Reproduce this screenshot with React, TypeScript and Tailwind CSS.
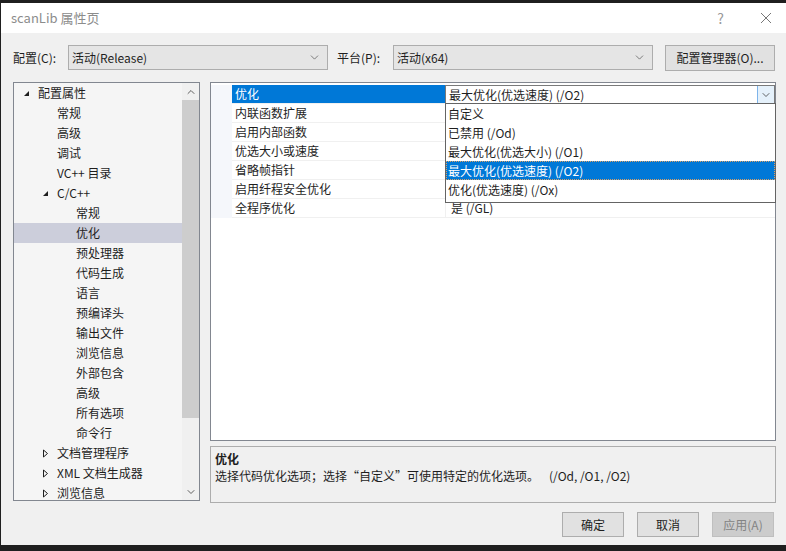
import { ChevronDown, ChevronUp } from "lucide-react";

const font = { fontFamily: '"Noto Sans CJK SC", "Noto Sans", sans-serif' };

type Node = { label: string; level: number; arrow?: "open" | "closed"; selected?: boolean };

const tree: Node[] = [
  { label: "配置属性", level: 0, arrow: "open" },
  { label: "常规", level: 1 },
  { label: "高级", level: 1 },
  { label: "调试", level: 1 },
  { label: "VC++ 目录", level: 1 },
  { label: "C/C++", level: 1, arrow: "open" },
  { label: "常规", level: 2 },
  { label: "优化", level: 2, selected: true },
  { label: "预处理器", level: 2 },
  { label: "代码生成", level: 2 },
  { label: "语言", level: 2 },
  { label: "预编译头", level: 2 },
  { label: "输出文件", level: 2 },
  { label: "浏览信息", level: 2 },
  { label: "外部包含", level: 2 },
  { label: "高级", level: 2 },
  { label: "所有选项", level: 2 },
  { label: "命令行", level: 2 },
  { label: "文档管理程序", level: 1, arrow: "closed" },
  { label: "XML 文档生成器", level: 1, arrow: "closed" },
  { label: "浏览信息", level: 1, arrow: "closed" },
];

const props = [
  ["优化", "最大优化(优选速度) (/O2)"],
  ["内联函数扩展", ""],
  ["启用内部函数", ""],
  ["优选大小或速度", ""],
  ["省略帧指针", ""],
  ["启用纤程安全优化", ""],
  ["全程序优化", "是 (/GL)"],
];

const options = ["自定义", "已禁用 (/Od)", "最大优化(优选大小) (/O1)", "最大优化(优选速度) (/O2)", "优化(优选速度) (/Ox)"];

function Arrow({ kind }: { kind: "open" | "closed" }) {
  if (kind === "open")
    return (
      <svg width="7" height="7" viewBox="0 0 7 7">
        <path d="M6 1 L6 6 L1 6 Z" fill="#1e1e1e" />
      </svg>
    );
  return (
    <svg width="7" height="9" viewBox="0 0 7 9">
      <path d="M1.5 1 L5.5 4.5 L1.5 8 Z" fill="none" stroke="#1e1e1e" strokeWidth="1" />
    </svg>
  );
}

function Combo({ text, className }: { text: string; className: string }) {
  return (
    <div className={`h-[25px] flex items-center justify-between border border-[#adadad] bg-[#e5e5e5] pl-[3px] pr-[6px] ${className}`}>
      <span>{text}</span>
      <ChevronDown size={13} strokeWidth={1.2} className="text-[#444]" />
    </div>
  );
}

export default function App() {
  return (
    <div className="w-[786px] h-[551px] overflow-hidden bg-[#1f1f1f] text-[12px] text-[#1e1e1e]" style={font}>
      <div className="mt-[3px] ml-[1px] h-[542px] flex flex-col bg-[#f0f0f0]">
        {/* Title bar */}
        <div className="h-[30px] bg-white flex items-center justify-between pl-[10px] pr-[14px]">
          <span className="text-[13px] text-[#8c8c8c]">scanLib 属性页</span>
          <div className="flex items-center gap-[36px] text-[#999]">
            <span className="text-[14px]">?</span>
            <svg width="12" height="12" viewBox="0 0 12 12">
              <path d="M1 1 L11 11 M11 1 L1 11" stroke="#777" strokeWidth="1" />
            </svg>
          </div>
        </div>

        {/* Config row */}
        <div className="flex items-center h-[27px] mt-[11px] pl-[12px]">
          <span className="w-[55px]">配置(C):</span>
          <Combo text="活动(Release)" className="w-[260px]" />
          <span className="ml-[9px] w-[56px]">平台(P):</span>
          <Combo text="活动(x64)" className="w-[260px]" />
          <div className="ml-[12px] w-[110px] h-[26px] border border-[#adadad] bg-[#e1e1e1] flex items-center justify-center">
            配置管理器(O)...
          </div>
        </div>

        {/* Main area */}
        <div className="flex mt-[11px] pl-[12px] h-[421px]">
          {/* Tree */}
          <div className="w-[187px] h-[419px] border border-[#828790] bg-[#f5f5f5] flex overflow-hidden">
            <div className="flex-1 flex flex-col overflow-hidden">
              {tree.map((n, i) => (
                <div
                  key={i}
                  className={`h-[20px] shrink-0 flex items-center ${n.selected ? "bg-[#cccedb]" : ""}`}
                  style={{ paddingLeft: 9 + n.level * 19 }}
                >
                  <span className="w-[15px] flex items-center">{n.arrow && <Arrow kind={n.arrow} />}</span>
                  <span>{n.label}</span>
                </div>
              ))}
            </div>
            <div className="w-[17px] flex flex-col items-center bg-[#f0f0f0]">
              <div className="h-[17px] flex items-center justify-center">
                <ChevronUp size={12} strokeWidth={2} className="text-[#606060]" />
              </div>
              <div className="w-full h-[318px] bg-[#cdcdcd]" />
              <div className="flex-1" />
              <div className="h-[17px] flex items-center justify-center">
                <ChevronDown size={12} strokeWidth={2} className="text-[#606060]" />
              </div>
            </div>
          </div>

          {/* Right side */}
          <div className="ml-[10px] w-[566px] flex flex-col">
            <div className="relative h-[359px] border border-[#828790] bg-white">
              <div className="flex flex-col pt-[2px]">
                {props.map(([name, value], i) => (
                  <div key={i} className="h-[19px] flex">
                    <div className="w-[21px] bg-[#f5f7fb]" />
                    <div
                      className={`w-[213px] flex items-center pl-[3px] border-b border-[#f0f0f0] ${
                        i === 0 ? "bg-[#0078d7] text-white border-[#0078d7]" : ""
                      }`}
                    >
                      {name}
                    </div>
                    {i === 0 ? (
                      <div className="flex-1 flex items-center justify-between border border-[#7a7a7a] bg-white pl-[3px]">
                        <span>{value}</span>
                        <div className="w-[17px] h-full flex items-center justify-center border-l border-[#7eb4ea] bg-[#e5f1fb]">
                          <ChevronDown size={12} strokeWidth={1.5} className="text-[#333]" />
                        </div>
                      </div>
                    ) : (
                      <div className="flex-1 flex items-center pl-[5px] border-b border-l border-[#f0f0f0]">{value}</div>
                    )}
                  </div>
                ))}
              </div>

              {/* Drop-down list */}
              <div className="absolute left-[234px] top-[20px] w-[331px] h-[100px] border border-[#646464] bg-white flex flex-col">
                {options.map((o, i) => (
                  <div
                    key={i}
                    className={`h-[19px] flex items-center pl-[2px] ${
                      i === 3 ? "bg-[#0078d7] text-white outline outline-1 outline-dotted outline-[#d9a066] -outline-offset-1" : ""
                    }`}
                  >
                    {o}
                  </div>
                ))}
              </div>
            </div>

            {/* Description */}
            <div className="mt-[5px] h-[57px] border border-[#adadad] bg-[#f0f0f0] px-[4px] pt-[3px] leading-[17px]">
              <div className="font-bold">优化</div>
              <div className="flex">
                <span>选择代码优化选项；选择“自定义”可使用特定的优化选项。</span>
                <span className="ml-[10px]">(/Od, /O1, /O2)</span>
              </div>
            </div>
          </div>
        </div>

        {/* Buttons */}
        <div className="flex justify-end gap-[13px] mt-[9px] pr-[12px]">
          <div className="w-[62px] h-[25px] border border-[#adadad] bg-[#e1e1e1] flex items-center justify-center">确定</div>
          <div className="w-[62px] h-[25px] border border-[#adadad] bg-[#e1e1e1] flex items-center justify-center">取消</div>
          <div className="w-[62px] h-[25px] border border-[#bfbfbf] bg-[#cccccc] text-[#838383] flex items-center justify-center">
            应用(A)
          </div>
        </div>
      </div>
    </div>
  );
}
